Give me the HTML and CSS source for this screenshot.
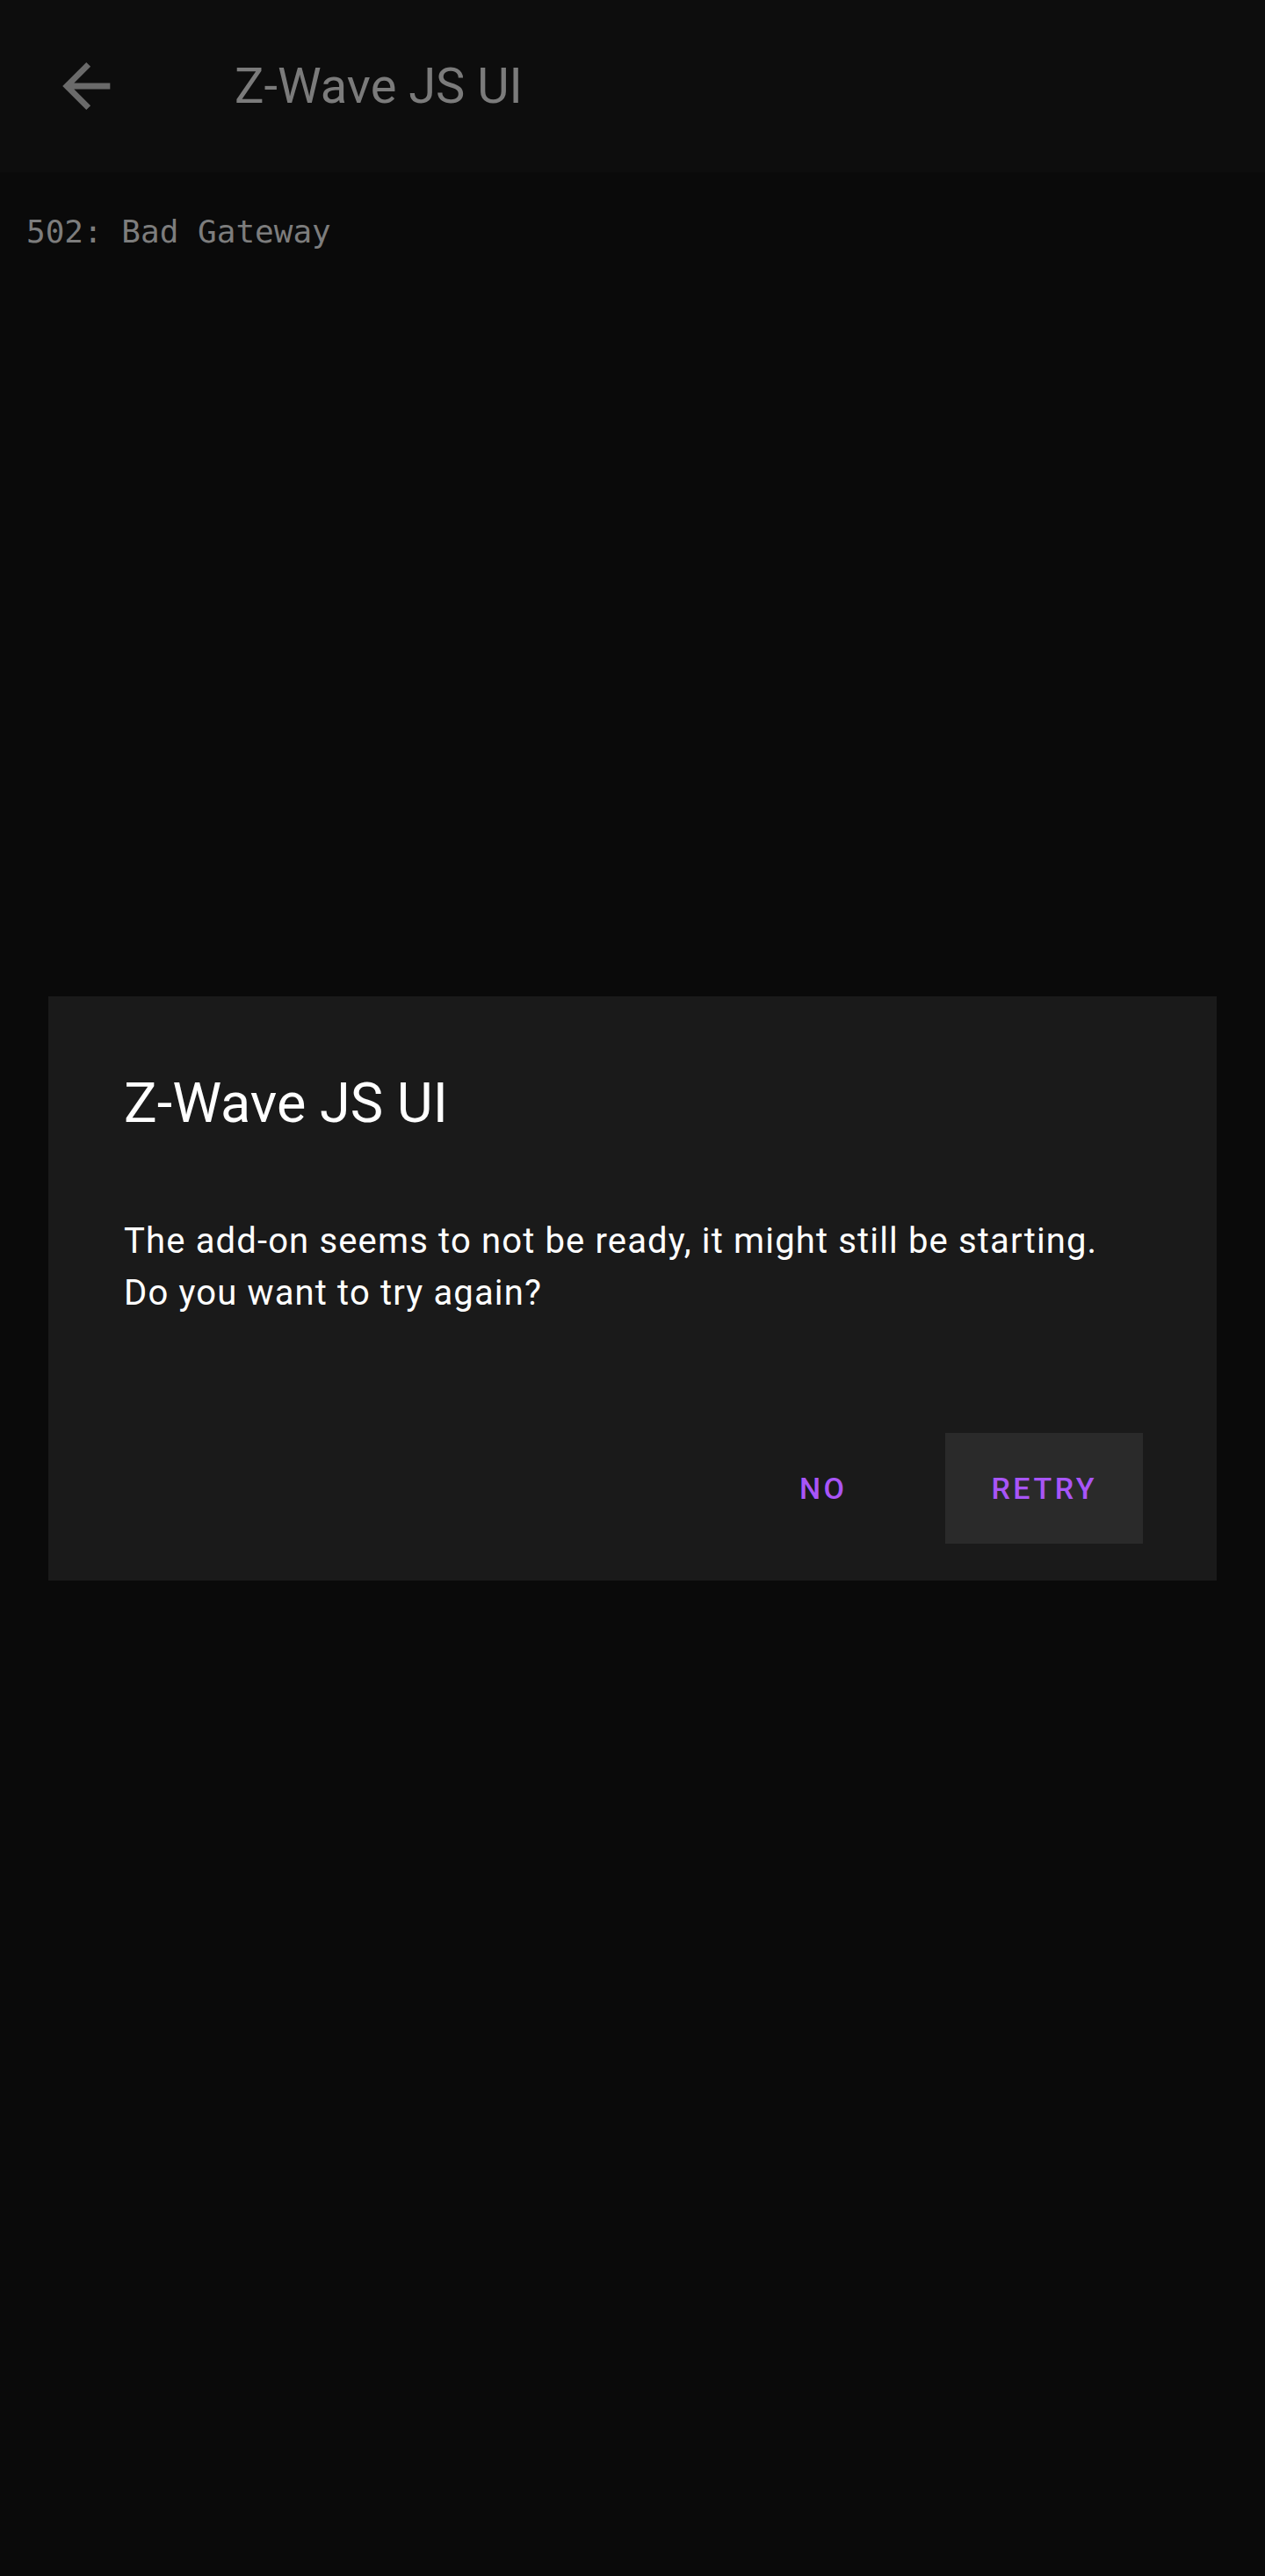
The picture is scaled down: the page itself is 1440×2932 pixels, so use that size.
FILE: index.html
```html
<!DOCTYPE html>
<html lang="en">
<head>
<meta charset="utf-8">
<title>Z-Wave JS UI</title>
<link rel="stylesheet" href="styles.css">
</head>
<body>
<header class="toolbar">
  <button class="back" aria-label="Back">
    <svg viewBox="0 0 24 24" class="back-icon"><path d="M20,11V13H8L13.5,18.5L12.08,19.92L4.16,12L12.08,4.08L13.5,5.5L8,11H20Z"/></svg>
  </button>
  <div class="toolbar-title">Z-Wave JS UI</div>
</header>
<main class="content">
  <pre class="error">502: Bad Gateway</pre>
</main>
<div class="scrim">
  <div class="dialog" role="dialog">
    <h2 class="dialog-title">Z-Wave JS UI</h2>
    <p class="dialog-text">The add-on seems to not be ready, it might still be starting.<br>Do you want to try again?</p>
    <div class="dialog-actions">
      <button class="btn">No</button>
      <button class="btn btn-focus">Retry</button>
    </div>
  </div>
</div>
</body>
</html>
```

FILE: styles.css
```css
html, body {
  margin: 0;
  padding: 0;
}
body {
  background: #0a0a0a;
  min-height: 2932px;
  font-family: Roboto, "Liberation Sans", sans-serif;
}
.toolbar {
  height: 196px;
  background: #0d0d0d;
  display: flex;
  align-items: center;
  padding-left: 57px;
  box-sizing: border-box;
}
.back {
  width: 82px;
  height: 82px;
  padding: 0;
  margin: 0;
  border: 0;
  background: transparent;
  display: flex;
}
.back-icon {
  width: 82px;
  height: 82px;
  fill: #6a6a6a;
}
.toolbar-title {
  margin-left: 128px;
  font-size: 56px;
  color: #7b7b7b;
  line-height: 1;
}
.content {
  padding: 46px 0 0 30px;
}
.error {
  margin: 0;
  font-family: "DejaVu Sans Mono", monospace;
  font-size: 36px;
  line-height: 44px;
  color: #7d7d7d;
}
.scrim {
  position: fixed;
  inset: 0;
  display: flex;
  align-items: center;
  justify-content: center;
}
.dialog {
  width: 1330px;
  background: #1a1a1a;
  box-sizing: border-box;
  padding: 82px 84px 42px 86px;
}
.dialog-title {
  margin: 0;
  font-weight: 400;
  font-size: 63px;
  line-height: 80px;
  color: #ffffff;
}
.dialog-text {
  margin: 87px 0 0;
  font-size: 40px;
  line-height: 59px;
  letter-spacing: 1.15px;
  color: #ffffff;
}
.dialog-actions {
  margin-top: 130px;
  display: flex;
  justify-content: flex-end;
  gap: 60px;
}
.btn {
  height: 126px;
  padding: 0 52px;
  border: 0;
  background: transparent;
  font-family: Roboto, "Liberation Sans", sans-serif;
  font-weight: 500;
  font-size: 34px;
  letter-spacing: 3.5px;
  text-transform: uppercase;
  color: #a855f7;
}
.btn-focus {
  background: #2a2a2a;
}
```
